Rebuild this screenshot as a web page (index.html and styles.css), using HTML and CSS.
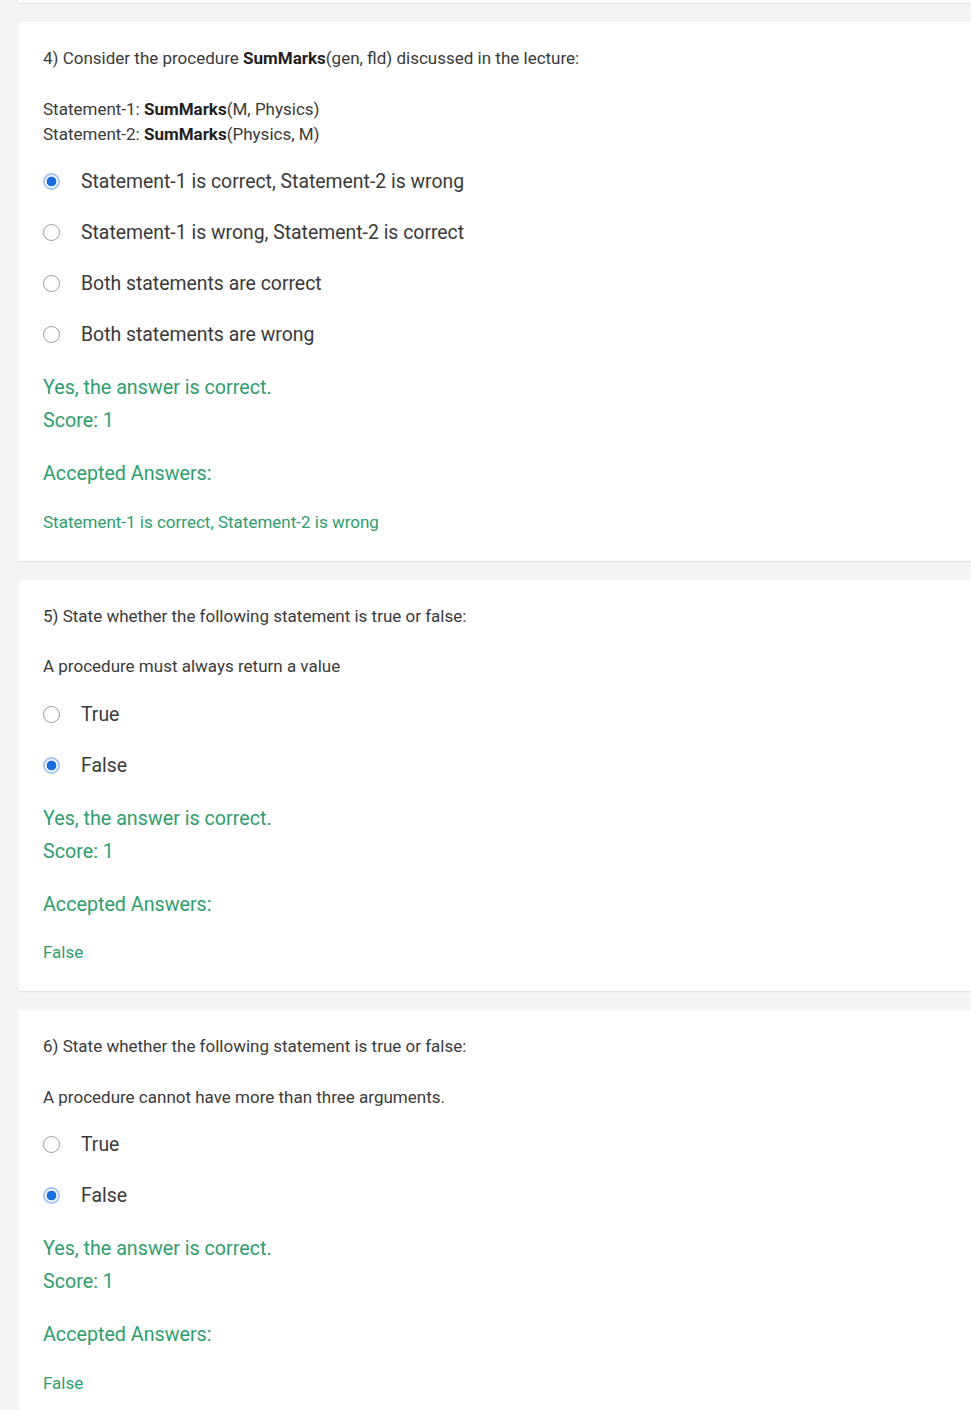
FILE: index.html
```html
<!DOCTYPE html>
<html lang="en">
<head>
<meta charset="utf-8">
<link rel="stylesheet" href="styles.css">
</head>
<body>
<div class="page">
  <div class="card card-stub"></div>

  <div class="card">
    <div class="q">4) Consider the procedure <b>SumMarks</b>(gen, fld) discussed in the lecture:</div>
    <div class="stmt">Statement-1: <b>SumMarks</b>(M, Physics)<br>Statement-2: <b>SumMarks</b>(Physics, M)</div>
    <div class="opts">
      <div class="opt"><span class="radio checked"></span><span>Statement-1 is correct, Statement-2 is wrong</span></div>
      <div class="opt"><span class="radio"></span><span>Statement-1 is wrong, Statement-2 is correct</span></div>
      <div class="opt"><span class="radio"></span><span>Both statements are correct</span></div>
      <div class="opt"><span class="radio"></span><span>Both statements are wrong</span></div>
    </div>
    <div class="fb">
      <div class="fb-line">Yes, the answer is correct.</div>
      <div class="fb-line">Score: 1</div>
      <div class="fb-line acc">Accepted Answers:</div>
      <div class="ans">Statement-1 is correct, Statement-2 is wrong</div>
    </div>
  </div>

  <div class="card">
    <div class="q">5) State whether the following statement is true or false:</div>
    <div class="stmt">A procedure must always return a value</div>
    <div class="opts">
      <div class="opt"><span class="radio"></span><span>True</span></div>
      <div class="opt"><span class="radio checked"></span><span>False</span></div>
    </div>
    <div class="fb">
      <div class="fb-line">Yes, the answer is correct.</div>
      <div class="fb-line">Score: 1</div>
      <div class="fb-line acc">Accepted Answers:</div>
      <div class="ans">False</div>
    </div>
  </div>

  <div class="card">
    <div class="q">6) State whether the following statement is true or false:</div>
    <div class="stmt">A procedure cannot have more than three arguments.</div>
    <div class="opts">
      <div class="opt"><span class="radio"></span><span>True</span></div>
      <div class="opt"><span class="radio checked"></span><span>False</span></div>
    </div>
    <div class="fb">
      <div class="fb-line">Yes, the answer is correct.</div>
      <div class="fb-line">Score: 1</div>
      <div class="fb-line acc">Accepted Answers:</div>
      <div class="ans">False</div>
    </div>
  </div>
</div>
</body>
</html>
```

FILE: styles.css
```css
html, body {
  margin: 0;
  padding: 0;
  background: #f4f4f6;
  font-family: Roboto, "Liberation Sans", sans-serif;
  color: #3a3a3a;
}

.page {
  padding-left: 19px;
  display: flex;
  flex-direction: column;
  gap: 19px;
}

.card {
  background: #ffffff;
  padding: 24px 24px 27px 24px;
  box-shadow: 0 1px 1px rgba(0, 0, 0, 0.07);
}

.card-stub {
  height: 3px;
  padding: 0;
}

.q {
  font-size: 17px;
  line-height: 24px;
}

.q b, .stmt b {
  font-weight: 700;
  color: #1e1e1e;
}

.stmt {
  margin-top: 26.5px;
  font-size: 17px;
  line-height: 25px;
}

.opts {
  margin-top: 9.5px;
  display: flex;
  flex-direction: column;
}

.opt {
  height: 51px;
  display: flex;
  align-items: center;
  gap: 21px;
  font-size: 19.4px;
  color: #3a3a3a;
}

.radio {
  width: 17px;
  height: 17px;
  box-sizing: border-box;
  border-radius: 50%;
  border: 1.5px solid #9a9a9a;
  flex: none;
}

.radio.checked {
  border: 2px solid #a9c8f2;
  background: radial-gradient(circle, #1a6fe0 0 4.6px, #ffffff 5.2px);
}

.fb {
  margin-top: 11px;
  color: #2f9e6e;
}

.fb-line {
  font-size: 19.7px;
  line-height: 33px;
}

.fb-line.acc {
  margin-top: 20px;
}

.ans {
  margin-top: 19.5px;
  font-size: 17px;
  line-height: 24px;
}
```
